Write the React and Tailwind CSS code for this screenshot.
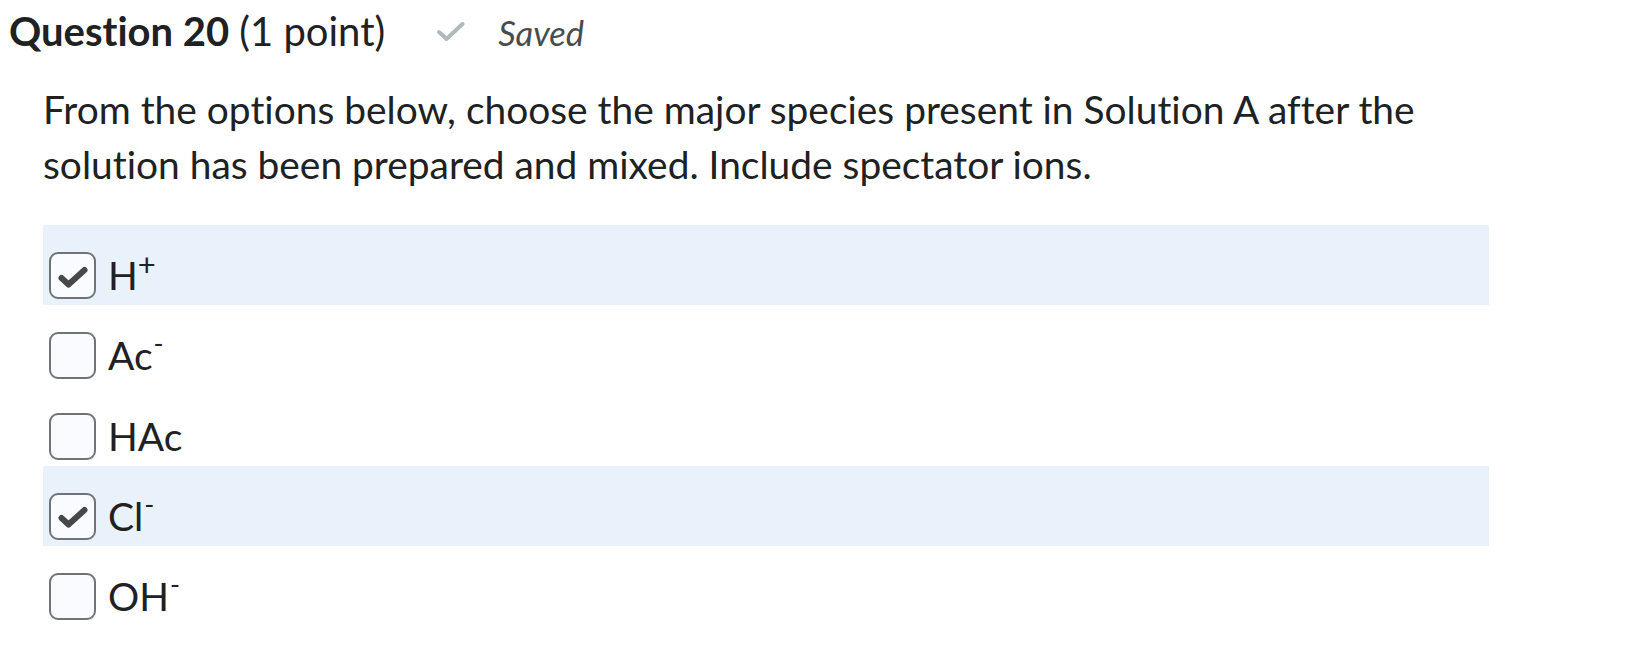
import React from "react";

const Check = () => (
  <svg width="34" height="26" viewBox="0 0 34 26" fill="none" className="relative top-[1px]">
    <path d="M5.5 14 L12.5 20.5 L28.5 6" stroke="#46494b" strokeWidth="6" strokeLinecap="round" strokeLinejoin="round" />
  </svg>
);

function Option({ checked, children }) {
  return (
    <div className={`h-[80.3px] flex items-start pt-[27px] pl-[6px] ${checked ? "bg-[#e9f1fb]" : ""}`}>
      <div className="w-[47px] h-[47px] rounded-[9px] border-2 border-[#6e7477] bg-[#f9fbff] flex items-center justify-center shrink-0">
        {checked && <Check />}
      </div>
      <div className="ml-[12px] text-[39px] leading-[47px] text-[#202122]">{children}</div>
    </div>
  );
}

const Sup = ({ children, cls = "" }) => (
  <span className={`relative ${cls}`}>{children}</span>
);

export default function App() {
  return (
    <div
      className="w-[1634px] h-[652px] bg-white text-[#202122] [font-variant-ligatures:none]"
      style={{ fontFamily: "Lato, 'Noto Sans', sans-serif" }}
    >
      <div className="pl-[9px] pt-[9px] flex items-baseline h-[52px]">
        <span className="text-[40px] font-bold leading-[44px]">Question 20</span>
        <span className="text-[40px] leading-[44px] ml-[10px]">(1 point)</span>
        <svg className="ml-[52px] self-center relative top-[1px]" width="28" height="20" viewBox="0 0 28 20" fill="none">
          <path d="M2 10 L9.5 17 L25.5 2" stroke="#b1b9be" strokeWidth="4" strokeLinecap="round" strokeLinejoin="round" />
        </svg>
        <span className="ml-[33px] text-[34.5px] italic text-[#494c4e] leading-[44px]">Saved</span>
      </div>
      <p className="ml-[43px] mt-[30px] text-[38.9px] leading-[55px] w-[1430px]">
        From the options below, choose the major species present in Solution A after the solution has been prepared and mixed. Include spectator ions.
      </p>
      <div className="ml-[43px] mt-[33px] w-[1446px]">
        <Option checked>
          H<Sup cls="text-[31px] -top-[14px]">+</Sup>
        </Option>
        <Option>
          Ac<Sup cls="text-[27px] -top-[17px] ml-[1px]">-</Sup>
        </Option>
        <Option>HAc</Option>
        <Option checked>
          Cl<Sup cls="text-[27px] -top-[17px] ml-[1px]">-</Sup>
        </Option>
        <Option>
          OH<Sup cls="text-[27px] -top-[17px] ml-[1px]">-</Sup>
        </Option>
      </div>
    </div>
  );
}
